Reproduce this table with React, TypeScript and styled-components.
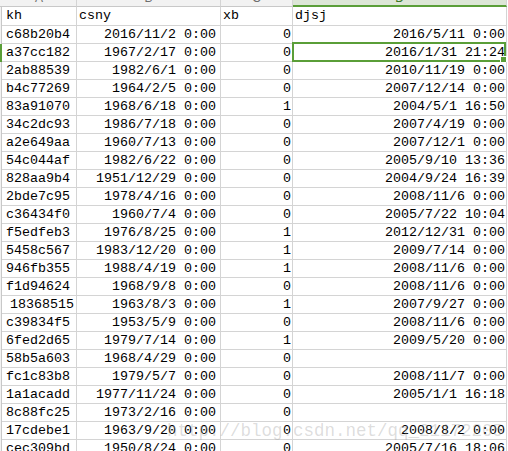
import React from "react";
import styled, { createGlobalStyle } from "styled-components";

const GlobalStyle = createGlobalStyle`
  html, body { margin: 0; padding: 0; background: #ffffff; overflow: hidden; }
`;

const GRID = "#d4d4d4";
const GREEN = "#5a9e38";

type Align = "left" | "right";

const Sheet = styled.div`
  position: relative;
  width: 508px;
  height: 451px;
  overflow: hidden;
  background: #ffffff;
  font-family: "Liberation Mono", "DejaVu Sans Mono", monospace;
  font-size: 13.33px;
  color: #000000;
`;

const Grid = styled.div`
  display: grid;
  grid-template-columns: 2px 75px 144px 72px 214px;
  grid-template-rows: 7px 19px;
  grid-auto-rows: 18px;
`;

const Corner = styled.div`
  box-sizing: border-box;
  background: #f2f2f2;
  border-bottom: 1px solid #c8c8c8;
`;

const ColHead = styled.div<{ $active?: boolean }>`
  box-sizing: border-box;
  display: flex;
  justify-content: center;
  align-items: flex-end;
  overflow: hidden;
  background: ${(p) => (p.$active ? "#dce6d6" : "#f2f2f2")};
  border-right: 1px solid ${GRID};
  border-bottom: ${(p) => (p.$active ? `2px solid ${GREEN}` : "1px solid #c8c8c8")};
  font-family: "Liberation Sans", Arial, sans-serif;
  font-size: 12px;
  line-height: 12px;
  color: ${(p) => (p.$active ? "#3c7a26" : "#6e6e6e")};
`;

const ColLetter = styled.span<{ $active?: boolean }>`
  margin-bottom: ${(p) => (p.$active ? 1 : 2)}px;
`;

const RowMark = styled.div<{ $active?: boolean }>`
  box-sizing: border-box;
  background: ${(p) => (p.$active ? GREEN : "#f2f2f2")};
  border-right: 1px solid ${(p) => (p.$active ? GREEN : "#c8c8c8")};
`;

const Cell = styled.div<{ $align: Align; $pl: number; $pr: number }>`
  box-sizing: border-box;
  position: relative;
  display: flex;
  align-items: center;
  justify-content: ${(p) => (p.$align === "right" ? "flex-end" : "flex-start")};
  padding: 0 ${(p) => p.$pr}px 0 ${(p) => p.$pl}px;
  border-right: 1px solid ${GRID};
  border-bottom: 1px solid ${GRID};
  white-space: nowrap;
  line-height: 1;
`;

const Selection = styled.div`
  position: absolute;
  top: -2px;
  left: -1px;
  right: 0;
  bottom: -1px;
  border: 2px solid ${GREEN};
  pointer-events: none;
`;

const FillHandle = styled.div`
  position: absolute;
  right: -3px;
  bottom: -3px;
  width: 5px;
  height: 5px;
  background: ${GREEN};
  border: 1px solid #ffffff;
`;

const Watermark = styled.div`
  position: absolute;
  left: 167px;
  top: 423px;
  font-family: "Liberation Mono", monospace;
  font-size: 17.5px;
  line-height: 17.5px;
  color: rgba(150, 150, 150, 0.32);
  white-space: nowrap;
  pointer-events: none;
`;

type Row = [string, string, string, string];

const header: Row = ["kh", "csny", "xb", "djsj"];

const rows: Row[] = [
  ["c68b20b4", "2016/11/2 0:00", "0", "2016/5/11 0:00"],
  ["a37cc182", "1967/2/17 0:00", "0", "2016/1/31 21:24"],
  ["2ab88539", "1982/6/1 0:00", "0", "2010/11/19 0:00"],
  ["b4c77269", "1964/2/5 0:00", "0", "2007/12/14 0:00"],
  ["83a91070", "1968/6/18 0:00", "1", "2004/5/1 16:50"],
  ["34c2dc93", "1986/7/18 0:00", "0", "2007/4/19 0:00"],
  ["a2e649aa", "1960/7/13 0:00", "0", "2007/12/1 0:00"],
  ["54c044af", "1982/6/22 0:00", "0", "2005/9/10 13:36"],
  ["828aa9b4", "1951/12/29 0:00", "0", "2004/9/24 16:39"],
  ["2bde7c95", "1978/4/16 0:00", "0", "2008/11/6 0:00"],
  ["c36434f0", "1960/7/4 0:00", "0", "2005/7/22 10:04"],
  ["f5edfeb3", "1976/8/25 0:00", "1", "2012/12/31 0:00"],
  ["5458c567", "1983/12/20 0:00", "1", "2009/7/14 0:00"],
  ["946fb355", "1988/4/19 0:00", "1", "2008/11/6 0:00"],
  ["f1d94624", "1968/9/8 0:00", "0", "2008/11/6 0:00"],
  ["18368515", "1963/8/3 0:00", "1", "2007/9/27 0:00"],
  ["c39834f5", "1953/5/9 0:00", "0", "2008/11/6 0:00"],
  ["6fed2d65", "1979/7/14 0:00", "1", "2009/5/20 0:00"],
  ["58b5a603", "1968/4/29 0:00", "0", ""],
  ["fc1c83b8", "1979/5/7 0:00", "0", "2008/11/7 0:00"],
  ["1a1acadd", "1977/11/24 0:00", "0", "2005/1/1 16:18"],
  ["8c88fc25", "1973/2/16 0:00", "0", ""],
  ["17cdebe1", "1963/9/20 0:00", "0", "2008/8/2 0:00"],
  ["cec309bd", "1950/8/24 0:00", "0", "2005/7/16 18:06"],
];

const pads: { l: number; r: number }[] = [
  { l: 4, r: 2 },
  { l: 2, r: 4 },
  { l: 2, r: 1 },
  { l: 2, r: 1 },
];

const isNumber = (v: string) => /^[0-9]+$/.test(v) || v.includes("/");

const letters = ["A", "B", "C", "D"];
const SELECTED_ROW = 1; // index in rows
const SELECTED_COL = 3;

export default function App() {
  return (
    <>
      <GlobalStyle />
      <Sheet>
        <Grid>
          <Corner />
          {letters.map((l, i) => (
            <ColHead key={l} $active={i === SELECTED_COL}>
              <ColLetter $active={i === SELECTED_COL}>{l}</ColLetter>
            </ColHead>
          ))}

          <RowMark />
          {header.map((h, i) => (
            <Cell key={"h" + i} $align="left" $pl={pads[i].l} $pr={pads[i].r}>
              {h}
            </Cell>
          ))}

          {rows.map((r, ri) => (
            <React.Fragment key={ri}>
              <RowMark $active={ri === SELECTED_ROW} />
              {r.map((v, ci) => {
                const selected = ri === SELECTED_ROW && ci === SELECTED_COL;
                return (
                  <Cell
                    key={ci}
                    $align={isNumber(v) ? "right" : "left"}
                    $pl={pads[ci].l}
                    $pr={pads[ci].r}
                  >
                    {v}
                    {selected && (
                      <Selection>
                        <FillHandle />
                      </Selection>
                    )}
                  </Cell>
                );
              })}
            </React.Fragment>
          ))}
        </Grid>
        <Watermark>http://blog.csdn.net/qq_21172205</Watermark>
      </Sheet>
    </>
  );
}
